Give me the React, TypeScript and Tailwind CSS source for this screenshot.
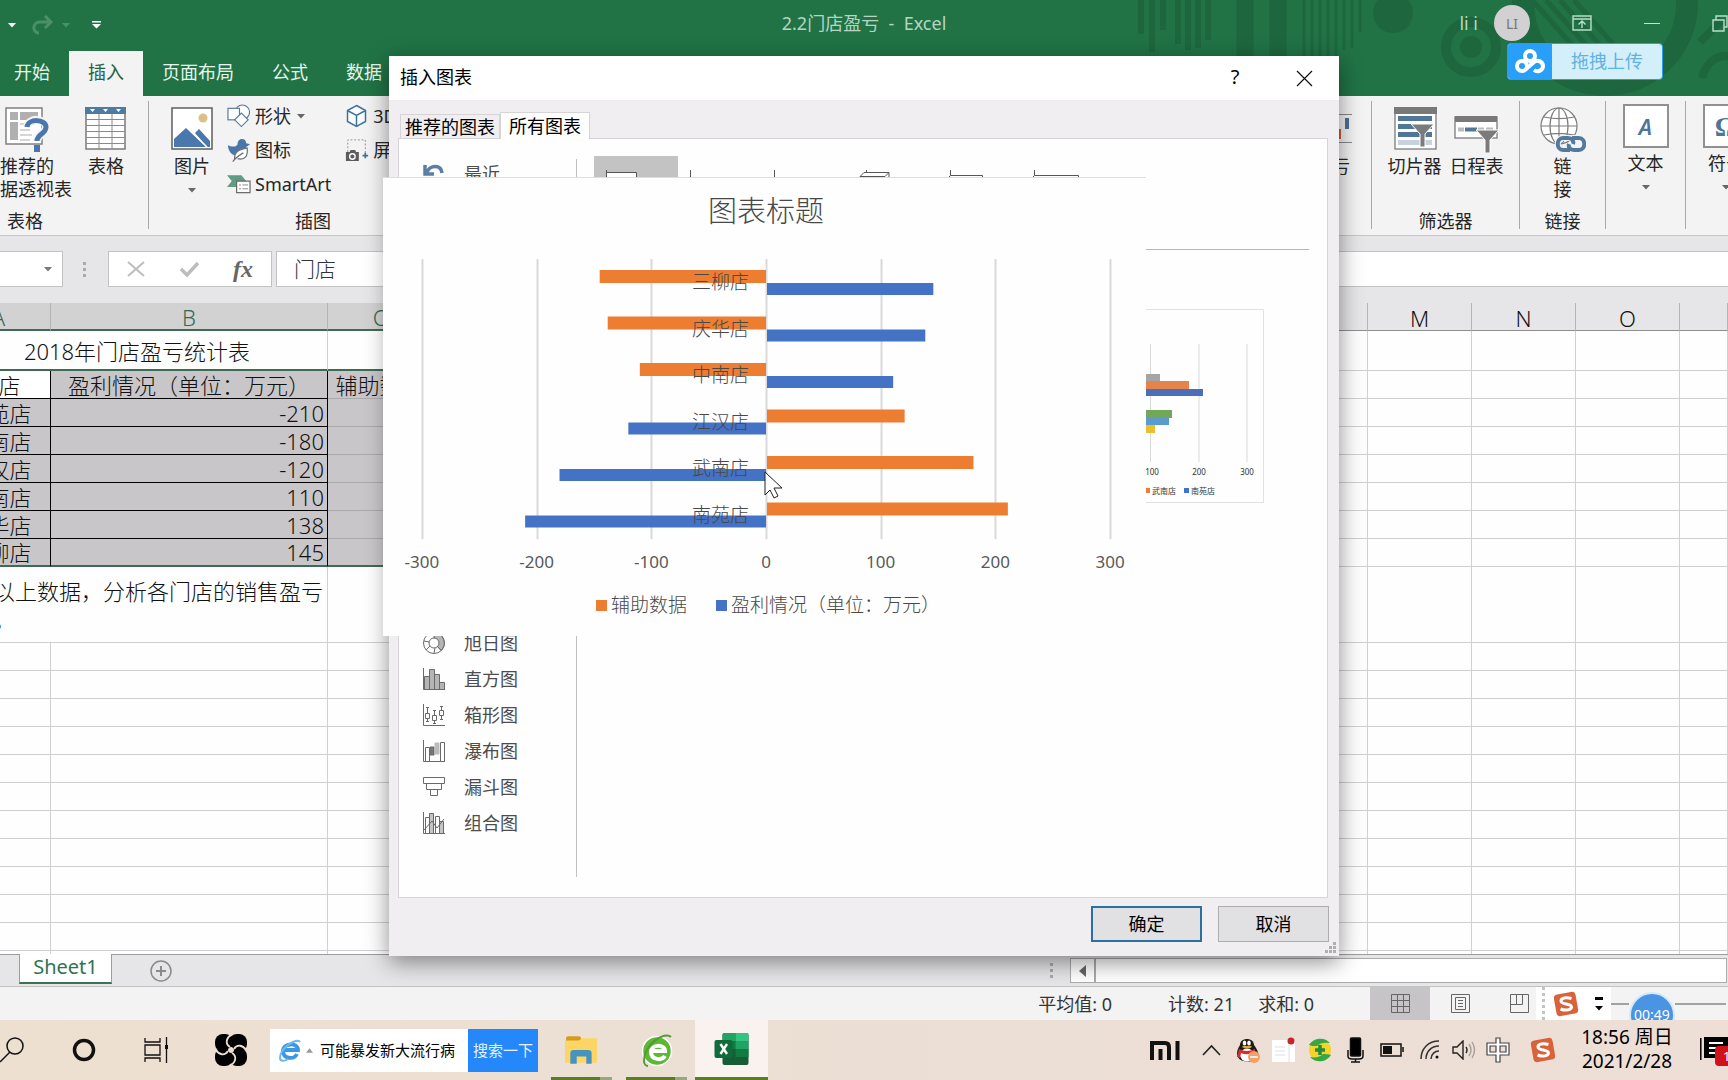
import React from 'react';

const stores = [
  { name: '三柳店', profit: 145 },
  { name: '庆华店', profit: 138 },
  { name: '中南店', profit: 110 },
  { name: '江汉店', profit: -120 },
  { name: '武南店', profit: -180 },
  { name: '南苑店', profit: -210 },
];

const columns = ['A', 'B', 'C', 'D', 'E', 'F', 'G', 'H', 'I', 'J', 'K', 'L', 'M', 'N', 'O', 'P'];

const Caret = ({ className = '' }: { className?: string }) => (
  <svg className={className} width="8" height="5" viewBox="0 0 8 5" fill="currentColor">
    <path d="M0 0h8L4 4.5z" />
  </svg>
);

/* ---------- Ribbon icons ---------- */

const PivotIcon = () => (
  <svg width="44" height="46" viewBox="0 0 44 46">
    <rect x="1" y="1" width="36" height="36" fill="#fff" stroke="#808080" strokeWidth="1.5" />
    <path d="M5 5h8v8H5zM15 5h18v8H15zM5 15h8v18H5z" fill="#b0b0b0" />
    <path d="M15 17h14M15 23h10M15 28h12M15 33h10" stroke="#c8c8c8" strokeWidth="1.5" />
    <path d="M22 20c1-10 19-9 19 0 0 7-9 7-9 14" fill="none" stroke="#f3f3f3" strokeWidth="8" />
    <path d="M22 20c1-9 19-8 19 0 0 7-9 7-9 14" fill="none" stroke="#4a77ab" strokeWidth="5" />
    <rect x="29" y="38" width="6" height="7" fill="#4a77ab" />
  </svg>
);

const TableIcon = () => (
  <svg width="42" height="44" viewBox="0 0 42 44">
    <rect x="1" y="1" width="39" height="41" fill="#fff" stroke="#7a7a7a" strokeWidth="1.5" />
    <path d="M1 12.500h39M1 18.500h39M1 24.500h39M1 30.500h39M1 36.500h39M14 6v36M27 6v36" stroke="#8a8a8a" />
    <rect x="0" y="0" width="41" height="7" fill="#4f7ba3" />
    <path d="M5 2h5L7.500 5zM18 2h5l-2.500 3zM31 2h5l-2.500 3z" fill="#fff" />
  </svg>
);

const PictureIcon = () => (
  <svg width="42" height="44" viewBox="0 0 42 44">
    <rect x="1" y="1" width="40" height="41" fill="#fff" stroke="#5d5d5d" strokeWidth="1.500" />
    <circle cx="32" cy="11" r="4.500" fill="#dcc08a" />
    <path d="M3 40v-8l12-11 20 19z" fill="#4a78ac" />
    <path d="M24 26l4-4 11 12v6h-3z" fill="#4a78ac" />
    <path d="M22 26l14 14" stroke="#fff" strokeWidth="1.200" />
  </svg>
);

const ShapesIcon = () => (
  <svg width="25" height="24" viewBox="0 0 25 24" fill="#fdfdfd" stroke="#55789c" strokeWidth="1.200">
    <circle cx="16" cy="8" r="7.500" />
    <rect x="1" y="4" width="12" height="12" />
    <path d="M15 9l7 7-7 7-7-7z" />
  </svg>
);

const DuckIcon = () => (
  <svg width="25" height="24" viewBox="0 0 25 24">
    <path d="M1 7c4 2 9 2 10-1 0-7 9-7 9-1l4 1-4 3c0 5-4 9-9 9C5 18 1 13 1 7z" fill="#4a77ab" />
    <path d="M8 22c-1-9 6-11 13-12 1 8-2 13-10 11M6 24c3-4 6-6 11-9" fill="#fff" stroke="#707070" strokeWidth="1.300" />
  </svg>
);

const SmartArtIcon = () => (
  <svg width="25" height="20" viewBox="0 0 25 20">
    <path d="M0 1h15l5 6-4 6H0l5-6z" fill="#5f9c85" />
    <rect x="10" y="7" width="14" height="12" fill="#fff" stroke="#6b6b6b" strokeWidth="1.300" />
    <path d="M12.500 11h2M16 11h6M12.500 15h2M16 15h6" stroke="#8a8a8a" />
  </svg>
);

const CubeIcon = () => (
  <svg width="22" height="24" viewBox="0 0 22 24" fill="#fbfdfe" stroke="#3f7396" strokeWidth="1.500">
    <path d="M10.500 1.500l9 5v11l-9 5-9-5v-11z" />
    <path d="M1.500 6.500l9 5 9-5M10.500 11.500v11" />
  </svg>
);

const ScreenshotIcon = () => (
  <svg width="26" height="25" viewBox="0 0 26 25">
    <path d="M3 14V1h19v14" fill="none" stroke="#8a8a8a" strokeDasharray="2 2" />
    <path d="M1 14h4l1-2h5l1 2h3v10H1z" fill="#5c5c5c" />
    <circle cx="8" cy="19" r="3" fill="none" stroke="#fff" strokeWidth="1.500" />
    <path d="M22 15v6M19 18h6" stroke="#44709b" strokeWidth="1.800" />
  </svg>
);

const WinLossIcon = () => (
  <svg width="40" height="44" viewBox="0 0 40 44">
    <path d="M0 7.500h40M0 35.500h40" stroke="#8a8a8a" />
    <rect x="25" y="22" width="4" height="10" fill="#c0603a" />
    <rect x="33" y="11" width="4" height="11" fill="#4f6f90" />
  </svg>
);

const SlicerIcon = () => (
  <svg width="44" height="46" viewBox="0 0 44 46">
    <rect x="2" y="1" width="41" height="41" fill="#fff" stroke="#7b7b7b" strokeWidth="1.300" />
    <rect x="1" y="0" width="43" height="7" fill="#787878" />
    <path d="M5 11.500h34M5 19.500h34M5 27.500h34" stroke="#507799" strokeWidth="5" />
    <path d="M5 35.500h34" stroke="#c5d2e0" strokeWidth="5" />
    <path d="M18 17h23l-9 10v13h-5V27z" fill="#7b7b7b" stroke="#fff" />
  </svg>
);

const TimelineIcon = () => (
  <svg width="46" height="46" viewBox="0 0 46 46">
    <rect x="1" y="10" width="42" height="21" fill="#fff" stroke="#7b7b7b" strokeWidth="1.300" />
    <rect x="1" y="9" width="42" height="6" fill="#787878" />
    <path d="M4 22.500h6M24 22.500h6M32 22.500h7" stroke="#bbb" strokeWidth="4" />
    <path d="M11 22.500h12" stroke="#507799" strokeWidth="4" />
    <path d="M22 23h23l-9 10v13h-5V33z" fill="#7b7b7b" stroke="#fff" />
  </svg>
);

const LinkIcon = () => (
  <svg width="46" height="46" viewBox="0 0 46 46" fill="none">
    <circle cx="19" cy="19" r="18" fill="#fff" stroke="#7d7d7d" strokeWidth="1.200" />
    <ellipse cx="19" cy="19" rx="9" ry="18" stroke="#7d7d7d" strokeWidth="1.200" />
    <path d="M1 19h36M19 1v36M4 10c9 2 21 2 30 0M4 28c9-2 21-2 30 0" stroke="#7d7d7d" strokeWidth="1.200" />
    <path d="M30 43h-7c-7 0-7-12 0-12h5c4 0 6 3 5 6M32 31h7c7 0 7 12 0 12h-5c-4 0-6-3-5-6" stroke="#f3f3f3" strokeWidth="6" />
    <path d="M30 43h-7c-7 0-7-12 0-12h5c4 0 6 3 5 6M32 31h7c7 0 7 12 0 12h-5c-4 0-6-3-5-6" stroke="#54799f" strokeWidth="4" />
  </svg>
);

const HeaderArt = () => (
  <svg className="absolute right-0 top-0" width="600" height="96" viewBox="0 0 600 96" fill="none" stroke="#1e673e">
    <path d="M13 0v34M24 0v52M35 0v30M50 0v44M60 0v50M70 0v48M80 0v40" strokeWidth="6" />
    <path d="M117 0v70M150 0v60" strokeWidth="17" />
    <path d="M176 0v62M184 0v62M192 0v62M200 0v58M208 0v58M216 0v50M224 0v48M232 0v32" strokeWidth="3" />
    <circle cx="265" cy="13" r="20" fill="#1e673e" stroke="none" />
    <circle cx="343" cy="47" r="25" strokeWidth="10" />
    <circle cx="343" cy="47" r="11" fill="#1e673e" stroke="none" />
    <circle cx="477" cy="3" r="82" strokeWidth="22" />
    <path d="M404 0l66 74M418 0l66 74M432 0l62 70M446 0l54 61" strokeWidth="5" />
    <path d="M572 42l22-22M574 78c4-18 20-26 30-20" strokeWidth="8" />
  </svg>
);

const BaiduIcon = () => (
  <svg width="30" height="26" viewBox="0 0 30 26" fill="none" stroke="#fff" strokeWidth="4">
    <circle cx="15" cy="7" r="5" />
    <circle cx="7" cy="17" r="5" />
    <path d="M11 20l8-7c4-3 9 0 9 4s-5 7-9 4" />
  </svg>
);

/* ---------- Ribbon ---------- */

const GroupLabel = ({ children }: { children: React.ReactNode }) => (
  <div className="mt-auto h-[26px] text-center leading-6">{children}</div>
);

const Divider = () => <div className="mb-[6px] mt-[5px] w-px shrink-0 bg-[#a9a9a9]" />;

const BigButton = ({ icon, children }: { icon: React.ReactNode; children: React.ReactNode }) => (
  <button className="flex shrink-0 flex-col items-center leading-[23px]">
    <span className="flex h-12 items-start justify-center">{icon}</span>
    {children}
  </button>
);

const SmallButton = ({ icon, children }: { icon: React.ReactNode; children: React.ReactNode }) => (
  <button className="flex h-[34px] items-center gap-1 whitespace-nowrap">
    <span className="flex w-6 justify-center">{icon}</span>
    {children}
  </button>
);

const Ribbon = () => (
  <div className="flex h-[140px] overflow-hidden border-b border-[#c6c6c6] bg-[#f3f3f3] text-[18px] text-[#262626]">
    <div className="-ml-[98px] flex w-[246px] shrink-0 flex-col pt-[11px]">
      <div className="flex justify-end gap-1 pr-3">
        <BigButton icon={<PivotIcon />}>
          <span>推荐的</span>
          <span>数据透视表</span>
        </BigButton>
        <div className="flex w-[60px] justify-center">
          <BigButton icon={<TableIcon />}>表格</BigButton>
        </div>
      </div>
      <GroupLabel>表格</GroupLabel>
    </div>
    <Divider />
    <div className="flex w-[328px] shrink-0 flex-col pt-[3px]">
      <div className="flex h-[104px] pl-[22px]">
        <div className="mt-2">
          <BigButton icon={<PictureIcon />}>
            图片
            <Caret className="mt-[10px] text-[#666]" />
          </BigButton>
        </div>
        <div className="ml-[14px]">
          <SmallButton icon={<ShapesIcon />}>
            形状
            <Caret className="ml-0.5 text-[#666]" />
          </SmallButton>
          <SmallButton icon={<DuckIcon />}>图标</SmallButton>
          <SmallButton icon={<SmartArtIcon />}>SmartArt</SmallButton>
        </div>
        <div className="ml-[14px]">
          <SmallButton icon={<CubeIcon />}>3D 模型</SmallButton>
          <SmallButton icon={<ScreenshotIcon />}>屏幕截图</SmallButton>
        </div>
      </div>
      <GroupLabel>插图</GroupLabel>
    </div>
    <div className="flex-1" />
    <div className="flex w-[66px] shrink-0 flex-col pr-3 pt-[11px]">
      <BigButton icon={<WinLossIcon />}>盈亏</BigButton>
    </div>
    <Divider />
    <div className="flex w-[147px] shrink-0 flex-col pt-[11px]">
      <div className="flex justify-center gap-2">
        <BigButton icon={<SlicerIcon />}>切片器</BigButton>
        <BigButton icon={<TimelineIcon />}>日程表</BigButton>
      </div>
      <GroupLabel>筛选器</GroupLabel>
    </div>
    <Divider />
    <div className="flex w-[85px] shrink-0 flex-col pt-[11px]">
      <BigButton icon={<LinkIcon />}>
        <span>链</span>
        <span>接</span>
      </BigButton>
      <GroupLabel>链接</GroupLabel>
    </div>
    <Divider />
    <div className="flex w-[79px] shrink-0 flex-col items-center pt-2">
      <BigButton
        icon={
          <span className="flex h-[44px] w-[46px] items-center justify-center border-2 border-[#909090] bg-white text-[22px] font-semibold italic text-[#4f7399]">
            A
          </span>
        }
      >
        文本
        <Caret className="mt-[10px] text-[#666]" />
      </BigButton>
    </div>
    <Divider />
    <div className="-mr-[38px] flex w-[80px] shrink-0 flex-col items-center pt-2">
      <BigButton
        icon={
          <span className="flex h-[44px] w-[46px] items-center justify-center border-2 border-[#909090] bg-white font-['Liberation_Serif',serif] text-[28px] font-bold text-[#4f7399]">
            Ω
          </span>
        }
      >
        符号
        <Caret className="mt-[10px] text-[#666]" />
      </BigButton>
    </div>
  </div>
);

/* ---------- Title bar and tabs ---------- */

const ribbonTabs = ['开始', '插入', '页面布局', '公式', '数据'];

const Header = () => (
  <div className="relative overflow-hidden bg-[#217346]">
    <HeaderArt />
    <div className="relative flex h-[51px] items-start justify-between text-[18px] text-[#b5d6c3]">
      <div className="-ml-2 flex h-[50px] flex-1 items-center">
        <Caret className="ml-4 text-white" />
        <svg className="ml-4 mr-2 text-[#4b9069]" width="22" height="20" viewBox="0 0 22 20" fill="none" stroke="currentColor" strokeWidth="3">
          <path d="M7 18C0 18 0 7 8 7h10M13 1l6 6-6 6" />
        </svg>
        <Caret className="text-[#4b9069]" />
        <svg className="ml-[22px]" width="9" height="8" viewBox="0 0 9 8" fill="#fff">
          <path d="M0 0h9v1.500H0zM0 3h9L4.500 7.500z" />
        </svg>
      </div>
      <h1 className="h-[46px] leading-[46px]">2.2门店盈亏&nbsp; -&nbsp; Excel</h1>
      <div className="-mr-2 flex h-[46px] flex-1 items-center justify-end">
        <span>li i</span>
        <span className="ml-4 flex h-9 w-9 items-center justify-center rounded-full bg-[#d3d0d2] text-[14px] text-[#777]">LI</span>
        <button aria-label="功能区显示选项" className="ml-[42px]">
          <svg width="20" height="16" viewBox="0 0 20 16" fill="none" stroke="#b6e0c6" strokeWidth="1.400">
            <path d="M1 1h18v14H1zM1 4h18M10 13V6M6.500 9.500L10 6l3.500 3.500" />
          </svg>
        </button>
        <button aria-label="最小化" className="ml-[52px] h-4 w-4">
          <span className="block h-px w-4 bg-[#c5e2d0]" />
        </button>
        <button aria-label="还原" className="ml-[52px]">
          <svg width="24" height="17" viewBox="0 0 24 17" fill="none" stroke="#b6e0c6" strokeWidth="1.400">
            <path d="M1 5h11v11H1zM4 5V1h11v11h-3" />
          </svg>
        </button>
      </div>
    </div>
    <nav className="relative -ml-[5px] flex h-[45px] text-[18px]">
      {ribbonTabs.map((tab) => (
        <button
          key={tab}
          className={tab === '插入' ? 'bg-[#f3f3f3] px-[19px] pb-0.5 text-[#256342]' : 'px-[19px] pb-0.5 text-[#e6f5ec]'}
        >
          {tab}
        </button>
      ))}
    </nav>
    {/* Upload widget floating over the title bar */}
    <button className="absolute right-[65px] top-[43px] flex h-[37px] w-[156px] overflow-hidden rounded border border-[#2a9ce8] bg-[#d3effa] text-[18px] text-[#62b2df]">
      <span className="flex h-full w-11 items-center justify-center bg-[#28a0fb]">
        <BaiduIcon />
      </span>
      <span className="flex-1 leading-[35px]">拖拽上传</span>
    </button>
  </div>
);

const FormulaBar = () => (
  <div className="flex bg-[#e6e6e8] pb-4 pt-[15px]">
    <div className="flex h-9 w-[63px] items-center justify-end border border-l-0 border-[#c3c3c5] bg-white pr-2.5">
      <Caret className="text-[#777]" />
    </div>
    <div className="ml-5 mr-[21px] flex w-1 flex-col justify-center gap-[3px]">
      <i className="h-[3px] w-[3px] bg-[#aaa]" />
      <i className="h-[3px] w-[3px] bg-[#aaa]" />
      <i className="h-[3px] w-[3px] bg-[#aaa]" />
    </div>
    <div className="flex h-9 w-[164px] items-center justify-between border border-[#c3c3c5] bg-white px-[18px]">
      <svg width="18" height="16" viewBox="0 0 18 16" stroke="#bdbdbd" strokeWidth="2">
        <path d="M1 1l16 14M17 1L1 15" />
      </svg>
      <svg width="19" height="16" viewBox="0 0 19 16" fill="none" stroke="#bdbdbd" strokeWidth="3.500">
        <path d="M1 8l6 6L18 2" />
      </svg>
      <span className="font-['Liberation_Serif',serif] text-[24px] font-bold italic leading-none text-[#666]">fx</span>
    </div>
    <input
      aria-label="编辑栏"
      className="ml-1 h-9 min-w-0 flex-1 border border-r-0 border-[#c3c3c5] bg-white pb-0.5 pl-[17px] text-[21px] font-light text-[#333] outline-none"
      defaultValue="门店"
    />
  </div>
);

/* ---------- Worksheet ---------- */

const gridCell = 'border-b border-r border-[#d0d0d2]';
const dataCell = 'border-b border-r border-black bg-[#c9c6c9]';
const lastCell = 'border-b-2 border-r border-b-[#3f6b55] border-r-black bg-[#c9c6c9]';

const EmptyCells = ({ count }: { count: number }) => (
  <>
    {Array.from({ length: count }).map((_, i) => (
      <td key={i} className={gridCell} />
    ))}
  </>
);

const Sheet = () => (
  <div className="min-h-0 flex-1 overflow-hidden bg-[#fefefe]">
    <div className="-ml-[53px]">
      <table className="w-full table-fixed border-separate border-spacing-0 text-[22px] font-light leading-[26px] text-[#111]">
        <colgroup>
          {columns.map((c) => (
            <col key={c} className={c === 'B' ? 'w-[277px]' : c === 'P' ? '' : 'w-[104px]'} />
          ))}
        </colgroup>
        <thead>
          <tr className="h-7">
            {columns.map((c) => (
              <th
                key={c}
                className={
                  'ABC'.includes(c)
                    ? 'border-b-2 border-r border-b-[#3f6b55] border-r-[#b5b5b5] bg-[#d2d2d3] p-0 pt-0.5 font-light leading-[22px] text-[#33694f]'
                    : 'border-b border-r border-b-[#8f8f8f] border-r-[#b5b5b5] bg-[#e6e6e8] p-0 pt-0.5 font-light leading-[22px]'
                }
              >
                {'ABCMNO'.includes(c) ? c : ''}
              </th>
            ))}
          </tr>
        </thead>
        <tbody>
          <tr className="h-10">
            <td colSpan={2} className="border-b-2 border-r border-b-[#3f6b55] border-r-[#d0d0d2] p-0 pt-0.5 text-center">
              2018年门店盈亏统计表
            </td>
            <td className="border-b-2 border-r border-b-[#3f6b55] border-r-[#d0d0d2]" />
            <EmptyCells count={13} />
          </tr>
          <tr className="h-7">
            <td className="border-b border-r border-black bg-white p-0 text-center">门店</td>
            <td className={`${dataCell} p-0 text-center`}>盈利情况（单位：万元）</td>
            <td className="border-b border-r border-[#aaa] bg-[#c9c6c9] p-0 text-center">辅助数据</td>
            <EmptyCells count={13} />
          </tr>
          {[...stores].reverse().map((s, i) => (
            <tr key={s.name} className="h-7">
              <td className={`${i === 5 ? lastCell : dataCell} p-0 text-center`}>{s.name}</td>
              <td className={`${i === 5 ? lastCell : dataCell} py-0 pl-0 pr-[3px] text-right`}>{s.profit}</td>
              <td
                className={
                  i === 5
                    ? 'border-b-2 border-r border-b-[#3f6b55] border-r-[#aaa] bg-[#c9c6c9]'
                    : 'border-b border-r border-[#aaa] bg-[#c9c6c9]'
                }
              />
              <EmptyCells count={13} />
            </tr>
          ))}
          <tr className="h-[76px]">
            <td colSpan={2} className={`${gridCell} px-0.5 py-0 leading-7`}>
              根据以上数据，分析各门店的销售盈亏情况。
            </td>
            <EmptyCells count={14} />
          </tr>
          {Array.from({ length: 12 }).map((_, i) => (
            <tr key={i} className="h-7">
              <EmptyCells count={16} />
            </tr>
          ))}
        </tbody>
      </table>
    </div>
  </div>
);

const SheetTabs = () => (
  <div className="flex h-[33px] items-start border-b border-t border-b-[#c3c3c3] border-t-[#9c9c9c] bg-[#e6e6e8]">
    <button className="-mt-px ml-[19px] h-[30px] w-[93px] border-x border-b-2 border-x-[#9c9c9c] border-b-[#3b7454] bg-white pb-0.5 text-[20px] leading-6 text-[#2f7450]">
      Sheet1
    </button>
    <button aria-label="新工作表" className="ml-[38px] mt-[5px]">
      <svg width="22" height="22" viewBox="0 0 22 22" fill="none" stroke="#8a8a8a" strokeWidth="1.500">
        <circle cx="11" cy="11" r="10" />
        <path d="M11 6v10M6 11h10" strokeWidth="2" />
      </svg>
    </button>
    <div className="ml-auto mr-[17px] flex flex-col gap-[3px] pt-2">
      <i className="h-[3px] w-[3px] bg-[#aaa]" />
      <i className="h-[3px] w-[3px] bg-[#aaa]" />
      <i className="h-[3px] w-[3px] bg-[#aaa]" />
    </div>
    <div className="mr-px mt-[3px] flex h-[25px] w-[38%] border border-[#ababab] bg-white">
      <button aria-label="向左滚动" className="flex w-[25px] items-center justify-center border-r-2 border-[#ababab]">
        <svg width="7" height="12" viewBox="0 0 7 12" fill="#666">
          <path d="M7 0v12L0 6z" />
        </svg>
      </button>
    </div>
  </div>
);

const SogouIcon = () => (
  <svg width="26" height="26" viewBox="0 0 26 26">
    <rect x="2" y="2" width="22" height="22" rx="4" fill="#d9623a" transform="rotate(-10 13 13)" />
    <path d="M18.500 7.500C13 6 8 7 8 10c0 4 10.500 2 10.500 6 0 3-6 4-11 2" fill="none" stroke="#fff" strokeWidth="3" />
  </svg>
);

const StatusBar = () => (
  <div className="flex h-[33px] items-center justify-end overflow-hidden bg-[#f3f3f3] text-[18px] text-[#333]">
    <span className="pt-px">平均值: 0</span>
    <span className="ml-14 pt-px">计数: 21</span>
    <span className="ml-6 pt-px">求和: 0</span>
    <button aria-label="普通" className="ml-14 flex h-full w-[60px] items-center justify-center bg-[#c6c4c7]">
      <svg width="19" height="19" viewBox="0 0 19 19" fill="none" stroke="#666">
        <path d="M.5.5h18v18H.5zM6.500.5v18M12.500.5v18M.5 6.500h18M.5 12.500h18" />
      </svg>
    </button>
    <button aria-label="页面布局" className="flex w-[60px] justify-center">
      <svg width="19" height="19" viewBox="0 0 19 19" fill="none" stroke="#666">
        <path d="M.5.5h18v18H.5zM4.500 3.500h10v12h-10zM7 6.500h5M7 9.500h5M7 12.500h5" />
      </svg>
    </button>
    <button aria-label="分页预览" className="flex w-[46px] justify-end pr-[7px]">
      <svg width="19" height="19" viewBox="0 0 19 19" fill="none" stroke="#666">
        <path d="M.5.5h18v18H.5zM6.500.5v10M12.500.5v10M.5 10.500h12" />
      </svg>
    </button>
    <div className="flex h-full w-[75px] items-center bg-white pl-1.5">
      <span className="h-full border-l-[3px] border-dotted border-[#c4c4c4]" />
      <span className="ml-2">
        <SogouIcon />
      </span>
      <span className="ml-4 flex flex-col items-center gap-[6px] text-black">
        <i className="h-[3px] w-2 bg-black" />
        <Caret />
      </span>
    </div>
    <div className="flex h-full w-[117px] items-center">
      <i className="h-0.5 w-[18px] bg-[#a3a3a3]" />
      <span className="mt-[5px] flex h-[46px] w-[46px] shrink-0 items-center justify-center self-start rounded-full border-2 border-[#d5e8f8] bg-[#4a94e4] text-[14px] leading-none text-white">
        00:49
      </span>
      <i className="h-0.5 w-[51px] bg-[#a3a3a3]" />
    </div>
  </div>
);

/* ---------- Insert chart dialog ---------- */

const axisTicks = [-300, -200, -100, 0, 100, 200, 300];

const ChartPreview = () => (
  <svg className="font-light" width="763" height="458" viewBox="0 0 763 458" fill="#484848">
    <text x="383" y="44" textAnchor="middle" fontSize="29">
      图表标题
    </text>
    {axisTicks.map((t) => (
      <g key={t}>
        <path d={`M${Math.round(383 + t * 1.147)}.5 81v280`} stroke="#d9d9d9" strokeWidth="2" />
        <text x={383 + t * 1.147} y="390" textAnchor="middle" fontSize="17" className="font-normal" fill="#595959">
          {t}
        </text>
      </g>
    ))}
    {stores.map((s, i) => {
      const y = 92 + i * 46.5;
      const w = Math.abs(s.profit) * 1.147;
      return (
        <g key={s.name}>
          <rect x={s.profit > 0 ? 383 - w : 384} y={y} width={w} height="13" fill="#ed7d31" />
          <rect x={s.profit > 0 ? 384 : 383 - w} y={y + 13} width={w} height="12" fill="#4472c4" />
          <text x="366" y={y + 19} textAnchor="end" fontSize="19">
            {s.name}
          </text>
        </g>
      );
    })}
    <rect x="213" y="422" width="11" height="11" fill="#ed7d31" />
    <text x="228" y="434" fontSize="19">
      辅助数据
    </text>
    <rect x="333" y="422" width="11" height="11" fill="#4472c4" />
    <text x="348" y="434" fontSize="19">
      盈利情况（单位：万元）
    </text>
  </svg>
);

const SmallPreview = () => (
  <svg className="ml-auto mr-[45px] mt-[59px]" width="560" height="194" viewBox="0 0 560 194" fill="#333" fontSize="8">
    <path d="M0 .5h559.500v193H0" fill="#fefefe" stroke="#e2e2e2" />
    <path d="M446.500 35v118M495 35v118M543 35v118" stroke="#d9d9d9" />
    <rect x="398" y="65" width="58" height="7" fill="#a5a5a5" />
    <rect x="398" y="72" width="87" height="8" fill="#e5834a" />
    <rect x="398" y="80" width="101" height="7" fill="#4a6fb8" />
    <rect x="398" y="101" width="70" height="8" fill="#70a857" />
    <rect x="398" y="109" width="67" height="7" fill="#5b9bd0" />
    <rect x="398" y="116" width="53" height="8" fill="#e8c030" />
    <text x="448" y="166" textAnchor="middle">100</text>
    <text x="495" y="166" textAnchor="middle">200</text>
    <text x="543" y="166" textAnchor="middle">300</text>
    <rect x="442" y="179" width="4" height="5" fill="#ed7d31" />
    <text x="448" y="185">武南店</text>
    <rect x="480" y="179" width="5" height="5" fill="#4472c4" />
    <text x="487" y="185">南苑店</text>
  </svg>
);

const SunburstIcon = () => (
  <>
    <circle cx="11" cy="11" r="10.500" />
    <path d="M11 .5a10.500 10.500 0 0 1 7 18L14 14a5 5 0 0 0-3-8z" fill="#b5b5b5" />
    <circle cx="11" cy="11" r="5" fill="#fff" />
    <path d="M1 9l5 1M3 18l4-4M11 21l1-5M18 18l-4-4" />
  </>
);

const chartTypes = [
  { name: '旭日图', icon: <SunburstIcon /> },
  {
    name: '直方图',
    icon: (
      <>
        <path d="M1.500 8.500h5v13h-5zM6.500 1.500h5v20h-5zM11.500 6.500h5v15h-5zM16.500 14.500h5v7h-5z" fill="#b5b5b5" />
        <path d="M.5 0v21.500H22" />
      </>
    ),
  },
  {
    name: '箱形图',
    icon: (
      <path d="M.5 0v21.500H22M2.500 9.500h4v5h-4zM9.500 11.500h4v5h-4zM16.500 6.500h4v5h-4zM4.500 3.500v6M4.500 14.500v3M3 3.500h3M3 17.500h3M11.500 6.500v5M11.500 16.500v3M10 6.500h3M10 19.500h3M18.500 2.500v4M18.500 11.500v4M17 2.500h3M17 15.500h3" />
    ),
  },
  {
    name: '瀑布图',
    icon: (
      <>
        <path d="M2.500 7.500h4v14h-4zM17.500 2.500h4v19h-4z" />
        <path d="M7 7h4v8H7z" fill="#777" />
        <path d="M12 3h4v11h-4z" fill="#bbb" stroke="#bbb" />
        <path d="M.5 0v21.500H22" />
      </>
    ),
  },
  { name: '漏斗图', icon: <path d="M.5 1.500h21v6H.5zM3.500 7.500h15v6h-15zM7.500 13.500h7v6h-7z" /> },
  {
    name: '组合图',
    icon: (
      <>
        <path d="M2.500 5.500h4v16h-4zM12.500 4.500h4v17h-4z" />
        <path d="M6.500 1.500h4v20h-4zM16.500 9.500h4v12h-4z" fill="#c5c5c5" />
        <path d="M.5 0v21.500H22M1 18l8-9 5 7 7-9" />
      </>
    ),
  },
];

const subtypeIcons = [
  <path key="0" d="M12.500 14v30M12.500 16.500h30v10h-30z" fill="#fff" />,
  <path key="1" d="M12.500 14v30" />,
  <path key="2" d="M12.500 14v30" />,
  <path key="3" d="M14 20.500l4-4h25l-4 4zM43 17v8M20.500 14v3" />,
  <path key="4" d="M20.500 14v5.500h32v3M20.500 19.500l-3 3" />,
  <path key="5" d="M20.500 14v5.500h44v3M20.500 19.500l-3 3" />,
];

const InsertChartDialog = () => (
  <div role="dialog" aria-label="插入图表" className="relative flex h-[900px] w-[950px] flex-col bg-[#f0eef1] text-[18px] text-black shadow-[0_6px_22px_rgba(0,0,0,0.45)]">
    <div className="flex h-11 shrink-0 items-center bg-white pl-[11px]">
      <h2 className="mr-auto pb-0.5">插入图表</h2>
      <button aria-label="帮助" className="w-5 pb-0.5 text-[20px]">?</button>
      <button aria-label="关闭" className="ml-[51px] mr-[26px]">
        <svg width="17" height="17" viewBox="0 0 17 17" stroke="#111" strokeWidth="1.200">
          <path d="M1 1l15 15M16 1L1 16" />
        </svg>
      </button>
    </div>
    <div className="ml-[11px] mt-3 flex h-[26px] shrink-0 items-end">
      <button className="h-6 w-[100px] border border-b-0 border-[#d6d4d7] leading-6">推荐的图表</button>
      <button className="z-10 -mb-px h-[27px] w-[90px] border border-b-0 border-[#d6d4d7] bg-[#fefefe] leading-6">所有图表</button>
    </div>
    <div className="ml-[9px] mr-[11px] flex min-h-0 flex-1 border border-[#d6d4d7] bg-[#fefefe]">
      <div className="my-5 flex w-[178px] flex-col justify-between border-r border-[#c0c0c0] pl-6 text-[#4d4d4d]">
        <button className="-mt-3 flex h-[54px] items-center gap-[19px]">
          <svg width="22" height="22" viewBox="0 0 22 22" fill="none" stroke="#5a7fa6" strokeWidth="3.500">
            <path d="M4 9c3-7 14-8 15 1M2 2v9h9" />
          </svg>
          最近
        </button>
        <ul className="mb-9">
          {chartTypes.map((t) => (
            <li key={t.name}>
              <button className="flex h-9 items-center gap-[19px]">
                <svg width="22" height="22" viewBox="0 0 22 22" fill="none" stroke="#6a6a6a">
                  {t.icon}
                </svg>
                {t.name}
              </button>
            </li>
          ))}
        </ul>
      </div>
      <div className="flex flex-1 flex-col pl-[17px] pr-[18px] pt-[17px]">
        <div className="flex h-[94px] border-b border-[#b5b5b5]">
          {subtypeIcons.map((icon, i) => (
            <button key={i} aria-label={`条形图 ${i + 1}`} className={i === 0 ? 'h-[78px] w-[84px] bg-[#c4c3c4]' : 'h-[78px] w-[84px]'}>
              <svg width="84" height="78" viewBox="0 0 84 78" fill="none" stroke="#555">
                {icon}
              </svg>
            </button>
          ))}
        </div>
        <SmallPreview />
      </div>
    </div>
    <div className="flex h-[58px] shrink-0 items-start justify-end gap-4 pr-[10px] pt-2">
      <button className="h-9 w-[111px] border-2 border-[#2b709f] bg-[#e1e1e4]">确定</button>
      <button className="h-9 w-[111px] border border-[#adadad] bg-[#e1e1e3]">取消</button>
    </div>
    <svg className="absolute bottom-[3px] right-[3px]" width="11" height="11" viewBox="0 0 11 11" fill="#b0aeb1">
      <path d="M8 0h3v3H8zM8 4h3v3H8zM8 8h3v3H8zM4 4h3v3H4zM4 8h3v3H4zM0 8h3v3H0z" />
    </svg>
    {/* Enlarged preview shown while hovering the thumbnail */}
    <div className="absolute -left-[6px] top-[121px] z-20 border-t border-[#dedede] bg-[#fefefe]">
      <ChartPreview />
      <svg className="absolute left-[381px] top-[293px]" width="20" height="28" viewBox="0 0 20 28" fill="#fff" stroke="#222">
        <path d="M1 1v23l5-5 4 8 4-2-4-8h8z" />
      </svg>
    </div>
  </div>
);

/* ---------- Taskbar ---------- */

const FolderIcon = () => (
  <svg width="33" height="30" viewBox="0 0 31 28">
    <rect x="1" y="1" width="14" height="8" rx="2" fill="#d69a20" />
    <path d="M0 5h13l3-2h14v23H0z" fill="#fcd565" />
    <path d="M5 27V17q0-3 3-3h14q3 0 3 3v10h-5v-7h-9v7z" fill="#4593c0" />
  </svg>
);

const BrowserIcon = () => (
  <svg width="32" height="36" viewBox="0 0 32 36" fill="none">
    <circle cx="16" cy="19" r="14.500" fill="#5db833" stroke="#fff" strokeWidth="1.500" />
    <path d="M24 24c-3 5-14 4-14-4s14-8 14-1H11" stroke="#fff" strokeWidth="4" />
    <path d="M30 5C24-1 3 12 3 29c0 3 2 5 4 5" stroke="#56983a" strokeWidth="2" />
  </svg>
);

const ExcelIcon = () => (
  <svg width="35" height="34" viewBox="0 0 34 34">
    <rect x="8" y="1" width="26" height="32" rx="2" fill="#185c37" />
    <path d="M10 1h11v8H8V3q0-2 2-2z" fill="#21a366" />
    <path d="M21 1h11q2 0 2 2v6H21z" fill="#33c481" />
    <path d="M8 9h13v8H8z" fill="#107c41" />
    <path d="M21 9h13v8H21z" fill="#21a366" />
    <path d="M21 17h13v8H21z" fill="#107c41" />
    <rect x="0" y="8" width="18" height="18" rx="2" fill="#0f6b39" />
    <path d="M6 12l6.500 10M12.500 12L6 22" stroke="#fff" strokeWidth="2.400" />
  </svg>
);

const IEIcon = () => (
  <svg width="24" height="24" viewBox="0 0 24 24" fill="none">
    <path d="M19 16c-3 6-14 5-14-3s15-9 15-1H7" stroke="#3c97e0" strokeWidth="3.800" />
    <path d="M22 4C19-1 2 10 2 20c0 4 5 3 8 1" stroke="#6bb8ee" strokeWidth="2" />
  </svg>
);

const TrayIcons = () => (
  <>
    <svg width="30" height="20" viewBox="0 0 30 20" fill="none" stroke="#111" strokeWidth="4">
      <path d="M2 20V3h13q4 0 4 4v13M10.500 9v11M27.500 1v19" />
    </svg>
    <svg className="ml-[22px]" width="19" height="12" viewBox="0 0 19 12" fill="none" stroke="#222" strokeWidth="1.600">
      <path d="M1 11l8.500-9L18 11" />
    </svg>
    <svg className="ml-[14px]" width="26" height="26" viewBox="0 0 26 26">
      <path d="M5 8C5 0 19 0 19 8c3 4 6 10 4 12-2 6-18 6-20 0-1-2-2-6 2-12z" fill="#1c1c1c" />
      <ellipse cx="12" cy="18" rx="7" ry="6.500" fill="#fff" />
      <ellipse cx="9.500" cy="6" rx="1.800" ry="2.500" fill="#fff" />
      <ellipse cx="14" cy="6" rx="1.800" ry="2.500" fill="#fff" />
      <path d="M7 10q5 3 10 0l-1-1H8z" fill="#e8a33a" />
      <path d="M4 12q8 4 16 0v3q-8 4-14 1l-1 5-3-1z" fill="#cf3030" />
      <circle cx="19" cy="20" r="6" fill="#f1a069" />
      <path d="M15 20h8" stroke="#fff" strokeWidth="1.500" />
    </svg>
    <svg className="ml-[10px]" width="26" height="26" viewBox="0 0 26 26">
      <path d="M1 3h23v22H1z" fill="#fff" />
      <path d="M18 8v17M4 10h10M4 14h10M4 18h10" stroke="#dedede" />
      <circle cx="20" cy="4" r="3.500" fill="#c4262b" />
    </svg>
    <svg className="ml-[10px]" width="26" height="26" viewBox="0 0 26 26">
      <circle cx="13" cy="13" r="11" fill="#f6d329" />
      <path d="M2 8C7 0 18 0 23 6c-6-1-10 0-13 3-3 0-6 0-8-1zM24 18c-5 8-16 8-21 2 6 1 10 0 13-3 3 0 6 0 8 1z" fill="#35a845" />
      <path d="M13 8v10M8 13h10" stroke="#238c3c" strokeWidth="3.500" />
    </svg>
    <svg className="ml-[14px]" width="17" height="26" viewBox="0 0 17 26" fill="none" stroke="#111" strokeWidth="1.500">
      <rect x="3.500" y="1" width="10" height="18" rx="1" fill="#000" />
      <path d="M1 13v6q0 3 4 3h7q4 0 4-3v-6M8.500 22v3M4 25h9" />
    </svg>
    <svg className="ml-4" width="24" height="14" viewBox="0 0 24 14" fill="none" stroke="#111" strokeWidth="1.500">
      <path d="M1 1h20v12H1zM23 4v5" />
      <path d="M3 3h9v8H3z" fill="#111" stroke="none" />
    </svg>
    <svg className="ml-4" width="20" height="20" viewBox="0 0 20 20" fill="none" stroke="#333" strokeWidth="1.500">
      <path d="M1 19C1 9 8 1 19 1M6 19C6 12 11 6 19 6M11 19c0-5 4-8 8-8" />
      <circle cx="17" cy="17" r="1.500" fill="#111" stroke="none" />
    </svg>
    <svg className="ml-3" width="24" height="20" viewBox="0 0 24 20" fill="none" stroke="#222" strokeWidth="1.400">
      <path d="M1 7v6h4l6 6V1L5 7zM14 7q2 3 0 6" />
      <path d="M17 4q4 6 0 12M20 2q5 8 0 16" stroke="#a79f98" />
    </svg>
    <svg className="ml-[10px]" width="24" height="26" viewBox="0 0 24 26" fill="#fff" stroke="#444" strokeWidth="1.200">
      <path d="M10 1h4v5h9v12h-9v7h-4v-7H1V6h9zM4 9v6h6V9zM14 9v6h6V9z" fillRule="evenodd" />
    </svg>
    <span className="ml-5">
      <SogouIcon />
    </span>
  </>
);

const Taskbar = () => (
  <div className="flex h-[60px] items-center overflow-hidden bg-linear-to-r from-[#eee0d0] via-[#ebdfd5] to-[#eeded6] text-black">
    <svg width="24" height="26" viewBox="0 0 24 26" fill="none" stroke="#111" strokeWidth="1.500">
      <circle cx="15" cy="9" r="8" />
      <path d="M10 15L0 25" />
    </svg>
    <svg className="ml-12" width="24" height="24" viewBox="0 0 24 24" fill="none" stroke="#111" strokeWidth="3.500">
      <circle cx="12" cy="12" r="9.500" />
    </svg>
    <svg className="ml-12" width="24" height="26" viewBox="0 0 24 26" fill="none" stroke="#111" strokeWidth="1.300">
      <path d="M1 1v4h15V1M1 25v-4h15v4M1 8h15v10H1zM22.500 0v26" />
      <rect x="21" y="8" width="3" height="4" fill="#111" stroke="none" />
    </svg>
    <svg className="ml-[47px]" width="32" height="32" viewBox="0 0 32 32" stroke="#ecdfd3">
      <rect x="0" y="0" width="18" height="18" rx="8" fill="#000" stroke="none" />
      <rect x="14" y="0" width="18" height="18" rx="8" fill="#000" stroke="none" />
      <rect x="14" y="14" width="18" height="18" rx="8" fill="#000" stroke="none" />
      <rect x="0" y="14" width="18" height="18" rx="8" fill="#000" stroke="none" />
      <path d="M15 13C10 10 11 4 16 1M19 15C22 10 28 11 31 16M17 19C22 22 21 28 16 31M13 17C10 22 4 21 1 16" fill="none" strokeWidth="1.800" />
      <circle cx="16" cy="16" r="2.500" fill="#ecdfd3" />
    </svg>
    <div className="ml-[23px] flex h-[43px] w-[268px] items-center bg-white pl-2 text-[15px]">
      <IEIcon />
      <svg className="ml-1 text-[#999]" width="7" height="5" viewBox="0 0 8 5" fill="currentColor">
        <path d="M0 5h8L4 0z" />
      </svg>
      <input
        aria-label="搜索"
        className="ml-[7px] min-w-0 flex-1 bg-transparent outline-none"
        defaultValue="可能暴发新大流行病"
      />
      <button className="h-full w-[70px] shrink-0 bg-[#2488fa] text-[#e6f3ff]">搜索一下</button>
    </div>
    <div className="ml-[13px] flex h-full">
      <button aria-label="文件资源管理器" className="relative flex w-[61px] items-center justify-center">
        <FolderIcon />
        <i className="absolute bottom-0 left-0 h-[3px] w-[49px] bg-[#54801f]" />
        <i className="absolute bottom-0 right-0 h-[3px] w-3 bg-[#94aa7c]" />
      </button>
      <button aria-label="浏览器" className="relative ml-[14px] flex w-[61px] items-center justify-center">
        <BrowserIcon />
        <i className="absolute bottom-0 left-0 h-[3px] w-[49px] bg-[#54801f]" />
        <i className="absolute bottom-0 right-0 h-[3px] w-3 bg-[#94aa7c]" />
      </button>
      <button aria-label="Excel" className="ml-2 flex w-[73px] items-center justify-center border-b-[3px] border-[#54801f] bg-[#f9f2ee]">
        <ExcelIcon />
      </button>
    </div>
    <div className="ml-auto flex items-center">
      <TrayIcons />
      <div className="ml-6 w-[94px] whitespace-nowrap pb-0.5 text-center text-[19px] leading-6">
        <div>18:56 周日</div>
        <div>2021/2/28</div>
      </div>
      <div className="relative ml-[26px] h-8 w-[28px]">
        <svg width="28" height="28" viewBox="0 0 28 28">
          <path d="M4 3h24v21H4z" fill="#000" />
          <path d="M.8 4v22" stroke="#000" strokeWidth="1.500" />
          <path d="M9 9h14M9 14h14M9 19h8" stroke="#fff" strokeWidth="2" />
        </svg>
        <span className="absolute -right-2 bottom-0 h-5 w-[21px] rounded bg-[#d1121b] pl-2 text-[13px] leading-5 text-white">1</span>
      </div>
    </div>
  </div>
);

const App = () => {
  return (
    <div className="relative flex h-screen flex-col overflow-hidden bg-white font-['Noto_Sans','Noto_Sans_CJK_SC',sans-serif]">
      <Header />
      <Ribbon />
      <FormulaBar />
      <Sheet />
      <SheetTabs />
      <StatusBar />
      <Taskbar />
      <div className="absolute inset-x-0 top-14 flex justify-center">
        <InsertChartDialog />
      </div>
    </div>
  );
};

export default App;
